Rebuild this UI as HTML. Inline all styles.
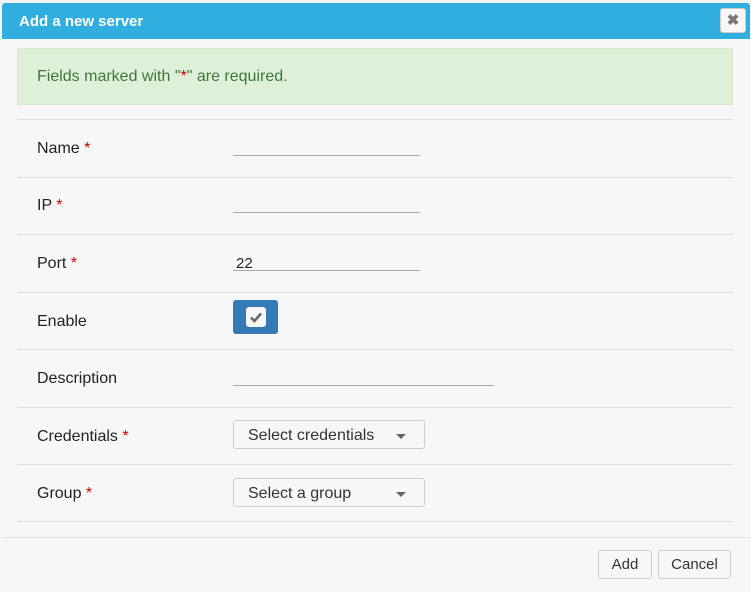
<!DOCTYPE html>
<html><head><style>
body{margin:0;width:751px;height:592px;background:#f7f7f7;font-family:"Liberation Sans",sans-serif;position:relative;overflow:hidden;color:#222}
.a{position:absolute}
.hd{left:2px;top:3px;width:748px;height:36px;background:#31aee0;border-radius:3px 3px 0 0}
.hd span{position:absolute;left:17px;top:10px;color:#fff;font-weight:bold;font-size:15px}
.x{left:720px;top:8px;width:26px;height:25px;background:#f7f7f7;border:1px solid #ccc;border-radius:3px;box-sizing:border-box;text-align:center;font-weight:bold;font-size:15px;line-height:23px;color:#777}
.al{left:17px;top:48px;width:716px;height:57px;background:#dff0d8;border:1px solid #d6e9c6;box-sizing:border-box;color:#3c763d;font-size:16px;padding:19px 0 0 19px}
.ln{left:17px;width:716px;height:1px;background:#ddd}
.lb{left:37px;font-size:16px}
.r{color:#c00}
.u{left:233px;width:187px;height:1px;background:#aaa}
.sel{left:233px;width:192px;height:29px;border:1px solid #ccc;border-radius:3px;box-sizing:border-box;background:#f7f7f7;font-size:16px;color:#333;padding:6px 0 0 14px}
.sel i{position:absolute;right:18px;top:13px;border-left:5px solid transparent;border-right:5px solid transparent;border-top:5px solid #666}
.bt{top:550px;height:29px;border:1px solid #ccc;border-radius:3px;box-sizing:border-box;font-size:15px;color:#333;text-align:center;line-height:28px}
</style></head><body>
<div class="a hd"><span>Add a new server</span></div>
<div class="a x">✖</div>
<div class="a al">Fields marked with "<span class="r">*</span>" are required.</div>
<div class="a ln" style="top:119px"></div>
<div class="a ln" style="top:177px"></div>
<div class="a ln" style="top:234px"></div>
<div class="a ln" style="top:292px"></div>
<div class="a ln" style="top:349px"></div>
<div class="a ln" style="top:407px"></div>
<div class="a ln" style="top:464px"></div>
<div class="a ln" style="top:521px"></div>
<div class="a lb" style="top:140px">Name <span class="r">*</span></div>
<div class="a lb" style="top:197px">IP <span class="r">*</span></div>
<div class="a lb" style="top:255px">Port <span class="r">*</span></div>
<div class="a lb" style="top:313px">Enable</div>
<div class="a lb" style="top:370px">Description</div>
<div class="a lb" style="top:428px">Credentials <span class="r">*</span></div>
<div class="a lb" style="top:485px">Group <span class="r">*</span></div>
<div class="a u" style="top:155px"></div>
<div class="a u" style="top:212px"></div>
<div class="a u" style="top:270px"></div>
<div class="a" style="left:236px;top:255px;font-size:15px">22</div>
<div class="a u" style="top:385px;width:261px"></div>
<div class="a" style="left:233px;top:300px;width:45px;height:34px;background:#337ab7;border-radius:3px"><div class="a" style="left:13px;top:7px;width:20px;height:20px;background:#f7f7f7;border-radius:3px">
<svg width="20" height="20" viewBox="0 0 20 20"><path d="M5 10.5 L8.5 14 L15 6.5" stroke="#666" stroke-width="2.6" fill="none"/></svg></div></div>
<div class="a sel" style="top:420px">Select credentials<i></i></div>
<div class="a sel" style="top:478px">Select a group<i></i></div>
<div class="a" style="left:2px;top:537px;width:748px;height:1px;background:#ddd"></div>
<div class="a bt" style="left:598px;width:54px">Add</div>
<div class="a bt" style="left:658px;width:73px">Cancel</div>
</body></html>
